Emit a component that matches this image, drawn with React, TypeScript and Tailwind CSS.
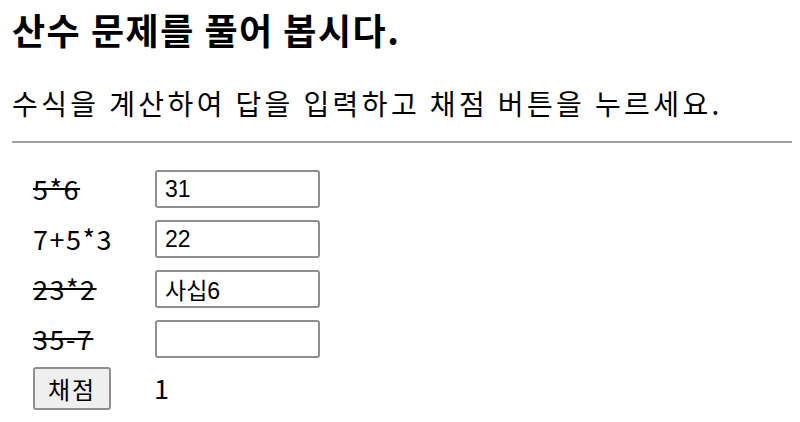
import { useState } from "react"

type TProblem = { expr: string; answer: number; value: string }

const initialProblems: TProblem[] = [
    { expr: "5*6", answer: 30, value: "31" },
    { expr: "7+5*3", answer: 22, value: "22" },
    { expr: "23*2", answer: 46, value: "사십6" },
    { expr: "35-7", answer: 28, value: "" },
]

const font = "font-['Malgun_Gothic','Noto_Sans_CJK_KR',sans-serif]"

export default function App() {
    const [problems, setProblems] = useState(initialProblems)
    const [score, setScore] = useState(1)

    const handleChange = (idx: number, value: string) => {
        setProblems((prev) => prev.map((p, i) => (i === idx ? { ...p, value } : p)))
    }

    const handleGrade = () => {
        setScore(problems.filter((p) => Number(p.value) === p.answer).length)
    }

    return (
        <div className={`min-h-[422px] w-[800px] bg-white pl-3 pr-2 text-black ${font}`}>
            <h1 className="pt-[8px] text-[36px] font-bold leading-[42px] tracking-[1.5px]">산수 문제를 풀어 봅시다.</h1>
            <p className="mt-[35px] text-[28px] leading-[36px] tracking-[3.4px]">
                수식을 계산하여 답을 입력하고 채점 버튼을 누르세요.
            </p>
            <hr className="mt-[20px] border-t-2 border-[#a0a0a0]" />
            <div className="mt-[27px] flex flex-col pl-[21px]">
                {problems.map((p, idx) => {
                    const correct = Number(p.value) === p.answer && p.value !== ""
                    return (
                        <div key={p.expr} className="flex h-[50px] items-start">
                            <span
                                className={`w-[122px] pt-[1px] text-[27px] leading-[36px] tracking-[1.5px] ${correct ? "" : "line-through"}`}
                            >
                                {p.expr}
                            </span>
                            <input
                                value={p.value}
                                onChange={(e) => handleChange(idx, e.target.value)}
                                className="h-[38px] w-[165px] rounded-[3px] border-2 border-[#8f8f8f] px-[8px] font-['Liberation_Sans','Noto_Sans_CJK_KR',sans-serif] text-[23px] outline-none"
                            />
                        </div>
                    )
                })}
                <div className="-mt-[3px] flex items-center">
                    <button
                        onClick={handleGrade}
                        className="h-[43px] w-[78px] rounded-[3px] border-2 border-[#8f8f8f] bg-[#efefef] text-[24px] tracking-[2px]"
                    >
                        채점
                    </button>
                    <span className="ml-[43px] text-[27px]">{score}</span>
                </div>
            </div>
        </div>
    )
}
